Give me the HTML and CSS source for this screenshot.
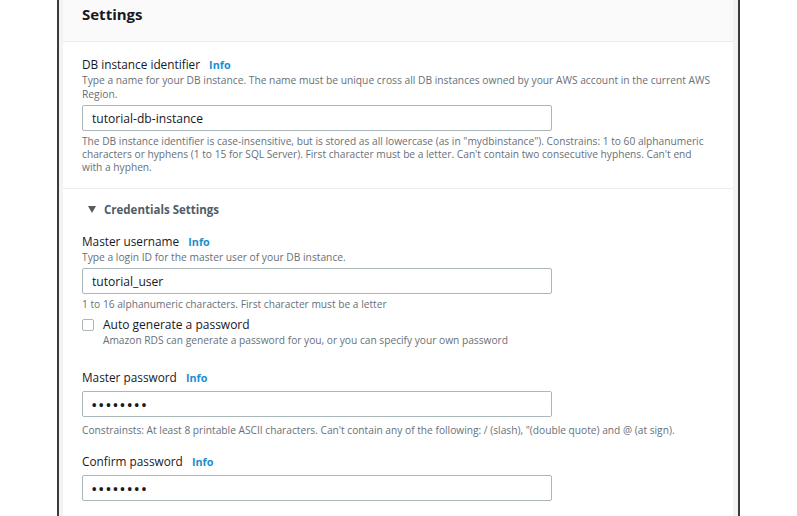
FILE: index.html
```html
<!DOCTYPE html>
<html lang="en">
<head>
  <meta charset="UTF-8">
  <title>Settings</title>
  <link rel="stylesheet" href="styles.css">
</head>
<body>
  <div class="page">
    <div class="panel">
      <div class="panel-header">
        <h2>Settings</h2>
      </div>

      <!-- DB instance identifier -->
      <div class="section first-section">
        <div class="field-label">DB instance identifier <a class="info" href="#">Info</a></div>
        <p class="desc">Type a name for your DB instance. The name must be unique cross all DB instances owned by your AWS account in the current AWS Region.</p>
        <input class="text-input" type="text" value="tutorial-db-instance">
        <p class="hint">The DB instance identifier is case-insensitive, but is stored as all lowercase (as in "mydbinstance"). Constrains: 1 to 60 alphanumeric characters or hyphens (1 to 15 for SQL Server). First character must be a letter. Can't contain two consecutive hyphens. Can't end with a hyphen.</p>
      </div>

      <!-- Credentials -->
      <div class="section last-section">
        <div class="expander"><span class="caret"></span>Credentials Settings</div>

        <div class="field-label user-label">Master username <a class="info" href="#">Info</a></div>
        <p class="desc">Type a login ID for the master user of your DB instance.</p>
        <input class="text-input" type="text" value="tutorial_user">
        <p class="hint">1 to 16 alphanumeric characters. First character must be a letter</p>

        <label class="check-row">
          <input type="checkbox">
          <span class="check-box"></span>
          <span>
            <span class="check-title">Auto generate a password</span>
            <span class="check-desc">Amazon RDS can generate a password for you, or you can specify your own password</span>
          </span>
        </label>

        <div class="field-label pass-label">Master password <a class="info" href="#">Info</a></div>
        <input class="text-input pass-input" type="password" value="password">
        <p class="hint pass-hint">Constrainsts: At least 8 printable ASCII characters. Can't contain any of the following: / (slash), "(double quote) and @ (at sign).</p>

        <div class="field-label confirm-label">Confirm password <a class="info" href="#">Info</a></div>
        <input class="text-input pass-input" type="password" value="password">
      </div>
    </div>
  </div>
</body>
</html>
```

FILE: styles.css
```css
body {
  margin: 0;
  background-color: #fff;
  font-family: "Open Sans", Arial, sans-serif;
  color: #16191f;
}
.page {
  margin-left: 57px;
  width: 670px;
  padding: 0 5px 0 4px;
  border-left: 2px solid #3b3b3b;
  border-right: 2px solid #3b3b3b;
  background-color: #f2f3f3;
  min-height: 560px;
}
.panel {
  background-color: #fff;
  min-height: 560px;
}
.panel-header {
  background-color: #fafafa;
  border-bottom: 1px solid #eaeded;
  height: 41px;
  padding: 0 19px;
}
.panel-header h2 {
  margin: 0;
  padding-top: 2px;
  font-size: 15px;
  line-height: 24px;
  font-weight: 700;
}
.section {
  padding: 13px 19px 14px;
  border-bottom: 1px solid #eaeded;
}
.first-section {
  padding-top: 14px;
}
.last-section {
  padding-bottom: 24px;
}
.field-label {
  font-size: 11.8px;
  line-height: 16px;
}
.info {
  font-size: 10.8px;
  font-weight: 700;
  color: #1a8fd0;
  text-decoration: none;
  margin-left: 6px;
}
.desc {
  margin: 0;
  font-size: 10.25px;
  line-height: 14px;
  color: #687078;
}
.text-input {
  display: block;
  box-sizing: border-box;
  width: 470px;
  height: 26px;
  margin-top: 4px;
  padding: 0 9px;
  border: 1px solid #aab7b8;
  border-radius: 2px;
  font-family: inherit;
  font-size: 12.1px;
  color: #16191f;
  outline: none;
}
.pass-input {
  margin-top: 5px;
  font-size: 17px;
  letter-spacing: 0.7px;
  padding-left: 8px;
}
.hint {
  margin: 4px 0 0;
  font-size: 10.2px;
  line-height: 13px;
  color: #687078;
}
.pass-hint {
  margin-top: 7px;
}
.expander {
  font-size: 11.5px;
  line-height: 16px;
  font-weight: 700;
  color: #545b64;
  padding-left: 6px;
}
.caret {
  display: inline-block;
  width: 0;
  height: 0;
  border-left: 4.5px solid transparent;
  border-right: 4.5px solid transparent;
  border-top: 7px solid #545b64;
  margin-right: 8px;
  vertical-align: 1px;
}
.user-label {
  margin-top: 15px;
}
.check-row {
  display: flex;
  margin-top: 6px;
}
.check-row input {
  display: none;
}
.check-box {
  box-sizing: border-box;
  width: 12px;
  height: 12px;
  margin-top: 2px;
  margin-right: 9px;
  border: 1px solid #aab7b8;
  border-radius: 2px;
  background-color: #fff;
}
.check-title {
  display: block;
  font-size: 12px;
  line-height: 16px;
}
.check-desc {
  display: block;
  font-size: 10.2px;
  line-height: 14px;
  color: #687078;
}
.pass-label {
  margin-top: 22px;
}
.confirm-label {
  margin-top: 16px;
}
```
